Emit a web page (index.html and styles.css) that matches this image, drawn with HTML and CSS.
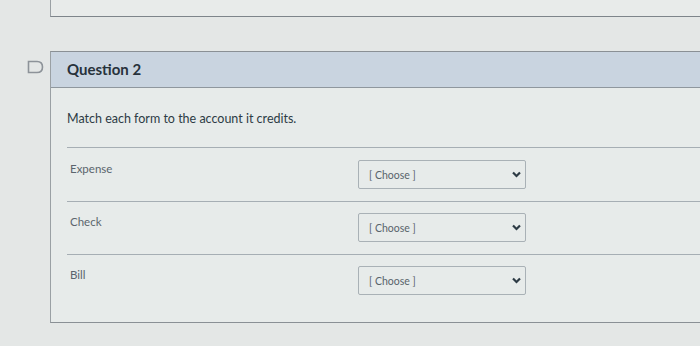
FILE: index.html
```html
<!DOCTYPE html>
<html>
<head>
<meta charset="utf-8">
<link rel="stylesheet" href="styles.css">
</head>
<body>
<div class="page">
  <div class="prev-card"></div>
  <div class="question-row">
    <div class="flag">
      <svg width="17" height="14" viewBox="0 0 17 14"><path d="M1.5 1.5 H10 Q15.5 1.5 15.5 7 Q15.5 12.5 10 12.5 H1.5 Z" fill="none" stroke="#8d9399" stroke-width="1.6"/></svg>
    </div>
    <div class="card">
      <div class="card-header">Question 2</div>
      <div class="card-body">
        <p class="prompt">Match each form to the account it credits.</p>
        <div class="matches">
          <div class="match">
            <span class="label">Expense</span>
            <div class="select"><span>[ Choose ]</span><svg class="chev" width="9" height="7" viewBox="0 0 9 7"><path d="M1 1.5 L4.5 5 L8 1.5" fill="none" stroke="#2d3b45" stroke-width="2.2"/></svg></div>
          </div>
          <div class="match mid">
            <span class="label">Check</span>
            <div class="select"><span>[ Choose ]</span><svg class="chev" width="9" height="7" viewBox="0 0 9 7"><path d="M1 1.5 L4.5 5 L8 1.5" fill="none" stroke="#2d3b45" stroke-width="2.2"/></svg></div>
          </div>
          <div class="match last">
            <span class="label">Bill</span>
            <div class="select"><span>[ Choose ]</span><svg class="chev" width="9" height="7" viewBox="0 0 9 7"><path d="M1 1.5 L4.5 5 L8 1.5" fill="none" stroke="#2d3b45" stroke-width="2.2"/></svg></div>
          </div>
        </div>
      </div>
    </div>
  </div>
</div>
</body>
</html>
```
FILE: styles.css
```css
html, body {
  margin: 0;
  padding: 0;
  background: #e4e7e6;
  font-family: Lato, "Liberation Sans", sans-serif;
  color: #2d3b45;
  overflow: hidden;
}
.page {
  width: 700px;
  height: 346px;
}
.prev-card {
  margin-left: 50px;
  height: 16px;
  border-left: 1px solid #9aa0a4;
  border-bottom: 1px solid #7e858b;
  background: #e8ebea;
}
.question-row {
  display: flex;
  margin-top: 34px;
}
.flag {
  width: 50px;
  display: flex;
  justify-content: flex-end;
  padding-top: 9px;
  padding-right: 6px;
  box-sizing: border-box;
}
.card {
  flex: 1;
  border-top: 1px solid #8a9095;
  border-left: 1px solid #9aa0a4;
  border-bottom: 1px solid #8a9095;
  background: #e7ebea;
}
.card-header {
  height: 35px;
  background: #c9d4e0;
  border-bottom: 1px solid #8f979e;
  padding-left: 16px;
  font-weight: 700;
  font-size: 15px;
  line-height: 34px;
  color: #27323b;
}
.card-body {
  padding: 23px 0 0 16px;
}
.prompt {
  margin: 0;
  font-size: 12.5px;
  line-height: 16px;
  color: #2d3b45;
}
.matches {
  margin-top: 20px;
}
.match {
  display: flex;
  border-top: 1px solid #a6aeb4;
  height: 54px;
  box-sizing: border-box;
  padding-top: 12px;
}
.match.mid {
  height: 53px;
  padding-top: 11px;
}
.match.last {
  height: 68px;
  padding-top: 11px;
}
.label {
  width: 288px;
  padding-left: 3px;
  font-size: 11.5px;
  line-height: 14px;
  color: #5b656d;
  padding-top: 2px;
}
.select {
  width: 168px;
  height: 29px;
  border: 1px solid #a9b1b6;
  border-radius: 2px;
  display: flex;
  align-items: center;
  justify-content: space-between;
  padding: 0 4px 0 10px;
  box-sizing: border-box;
  font-size: 10.5px;
  color: #58636b;
}
.select span {
  padding-top: 1px;
}
.chev {
  display: block;
}
```
